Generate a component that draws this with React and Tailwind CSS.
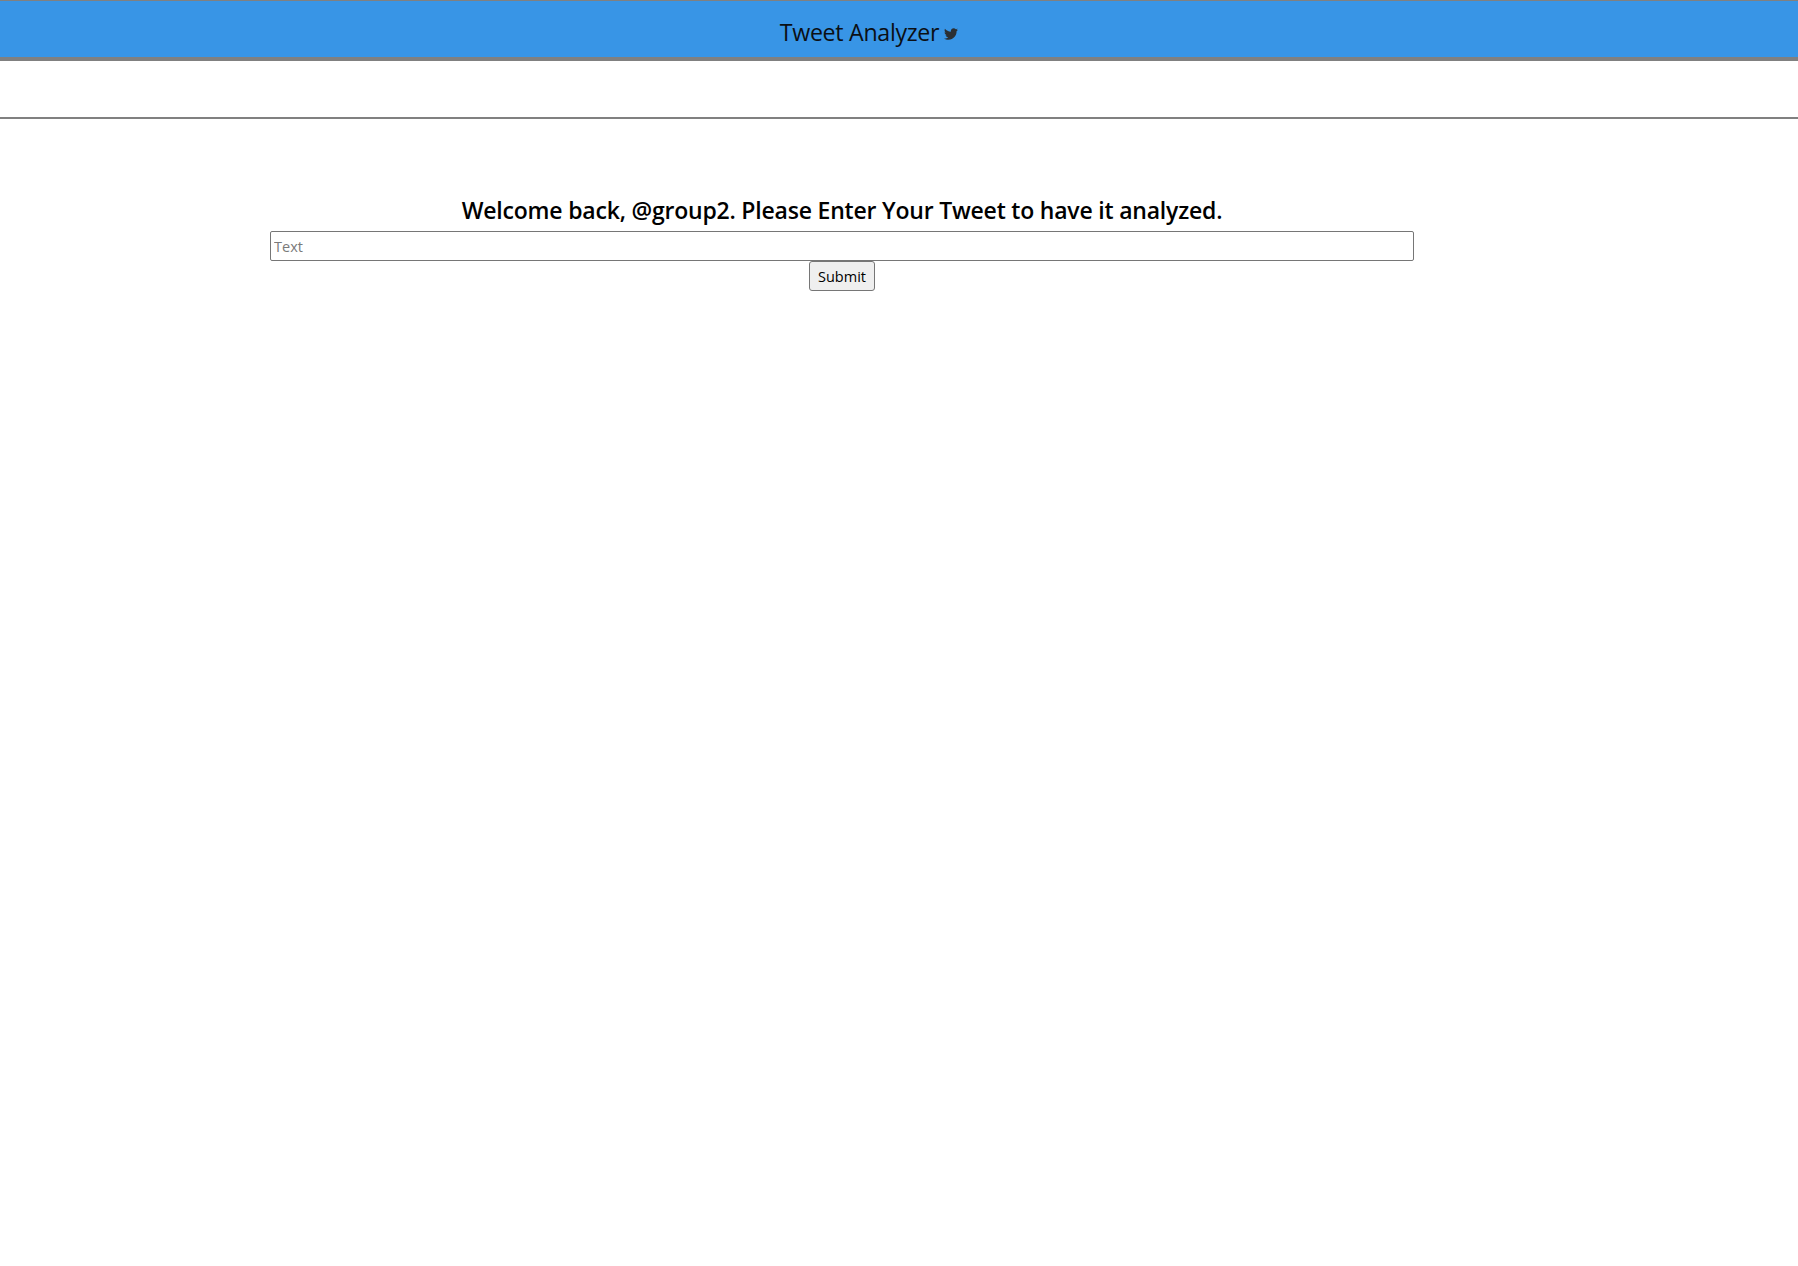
import { FaTwitter } from "react-icons/fa";

export default function App() {
    return (
        <div className="min-h-[1266px] bg-white font-['Open_Sans','Noto_Sans',sans-serif] text-black">
            <header className="h-[61px] bg-[#3895e6] border-t border-b-4 border-t-[#808080] border-b-[#808080] flex items-center justify-center pr-[60px] pt-[7px]">
                <span className="text-[23.2px] leading-none text-[#0b0f14] tracking-[-0.3px]">Tweet Analyzer</span>
                <FaTwitter className="ml-[5px] mt-[3px] w-[14px] h-[14px] text-[#2b2f33]" />
            </header>
            <div className="h-[58px] border-b-2 border-[#808080]" />

            <main className="pt-[76px] pl-[270px]">
                <div className="w-[1144px] flex flex-col items-center">
                    <h2 className="h-[36px] pb-[5px] flex items-center text-[23px] font-semibold leading-none tracking-[-0.2px]">
                        Welcome back, @group2. Please Enter Your Tweet to have it analyzed.
                    </h2>
                    <input
                        type="text"
                        placeholder="Text"
                        className="w-full h-[30px] border border-[#767676] rounded-[2px] px-[3px] text-[14.5px] placeholder:text-[#7a7a7a] outline-none"
                    />
                    <button
                        type="button"
                        className="h-[30px] w-[66px] pt-[1px] bg-[#efefef] border border-[#767676] rounded-[3px] text-[14.5px] text-black"
                    >
                        Submit
                    </button>
                </div>
            </main>
        </div>
    );
}
